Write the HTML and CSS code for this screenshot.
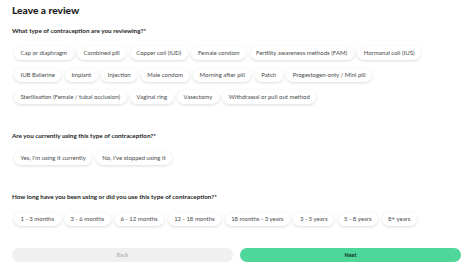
FILE: index.html
```html
<!DOCTYPE HTML>
<html>
<head>
    <title>Leave a review</title>
    <meta name="viewport" content="width=device-width, initial-scale=1">
    <link rel="stylesheet" href="styles.css">
</head>
<body>
    <div class="review">
        <h1 class="title">Leave a review</h1>

        <!-- type -->
        <p class="question first">What type of contraception are you reviewing?*</p>
        <div class="chips">
            <span class="chip">Cap or diaphragm</span>
            <span class="chip">Combined pill</span>
            <span class="chip">Copper coil (IUD)</span>
            <span class="chip">Female condom</span>
            <span class="chip">Fertility awareness methods (FAM)</span>
            <span class="chip">Hormonal coil (IUS)</span>
            <span class="chip">IUB Ballerine</span>
            <span class="chip">Implant</span>
            <span class="chip">Injection</span>
            <span class="chip">Male condom</span>
            <span class="chip">Morning after pill</span>
            <span class="chip">Patch</span>
            <span class="chip">Progestogen-only / Mini pill</span>
            <span class="chip">Sterilisation (Female / tubal occlusion)</span>
            <span class="chip">Vaginal ring</span>
            <span class="chip">Vasectomy</span>
            <span class="chip">Withdrawal or pull out method</span>
        </div>

        <!-- current -->
        <p class="question">Are you currently using this type of contraception?*</p>
        <div class="chips">
            <span class="chip">Yes, I'm using it currently</span>
            <span class="chip">No, I've stopped using it</span>
        </div>

        <!-- duration -->
        <p class="question">How long have you been using or did you use this type of contraception?*</p>
        <div class="chips">
            <span class="chip">1 - 3 months</span>
            <span class="chip">3 - 6 months</span>
            <span class="chip">6 - 12 months</span>
            <span class="chip">12 - 18 months</span>
            <span class="chip">18 months - 3 years</span>
            <span class="chip">3 - 5 years</span>
            <span class="chip">5 - 8 years</span>
            <span class="chip">8+ years</span>
        </div>

        <div class="actions">
            <button class="btn back" disabled>Back</button>
            <button class="btn next">Next</button>
        </div>
    </div>
</body>
</html>
```

FILE: styles.css
```css
html {font-family: "Lato", "Liberation Sans", sans-serif; color: #1c1c1c;}
body {margin: 0; background: #fff;}
.review {padding: 4px 13px 0 12px;}
.title {font-size: 10.2px; font-weight: 900; margin: 0; line-height: 13px;}
.question {font-size: 6.3px; font-weight: 700; margin: 28px 0 0 0; line-height: 8px;}
.question.first {margin-top: 10px;}
.chips {display: flex; flex-wrap: wrap; gap: 8px 3.5px; padding: 11px 2px 0 2px;}
.chip {font-size: 6px; line-height: 14px; height: 14px; padding: 0 6.5px; background: #fff; border-radius: 7px; box-shadow: 0 1px 3px rgba(0,0,0,0.14); color: #4a4a4a;}
.actions {display: flex; gap: 7px; margin-top: 22px;}
.btn {flex: 1; height: 14px; border: 0; border-radius: 7px; font-family: inherit; font-size: 5.5px; font-weight: 700; padding: 0;}
.back {background: #f0f0f0; color: #b5b5b5;}
.next {background: #4fd69b; color: #0d2b1c;}
```
